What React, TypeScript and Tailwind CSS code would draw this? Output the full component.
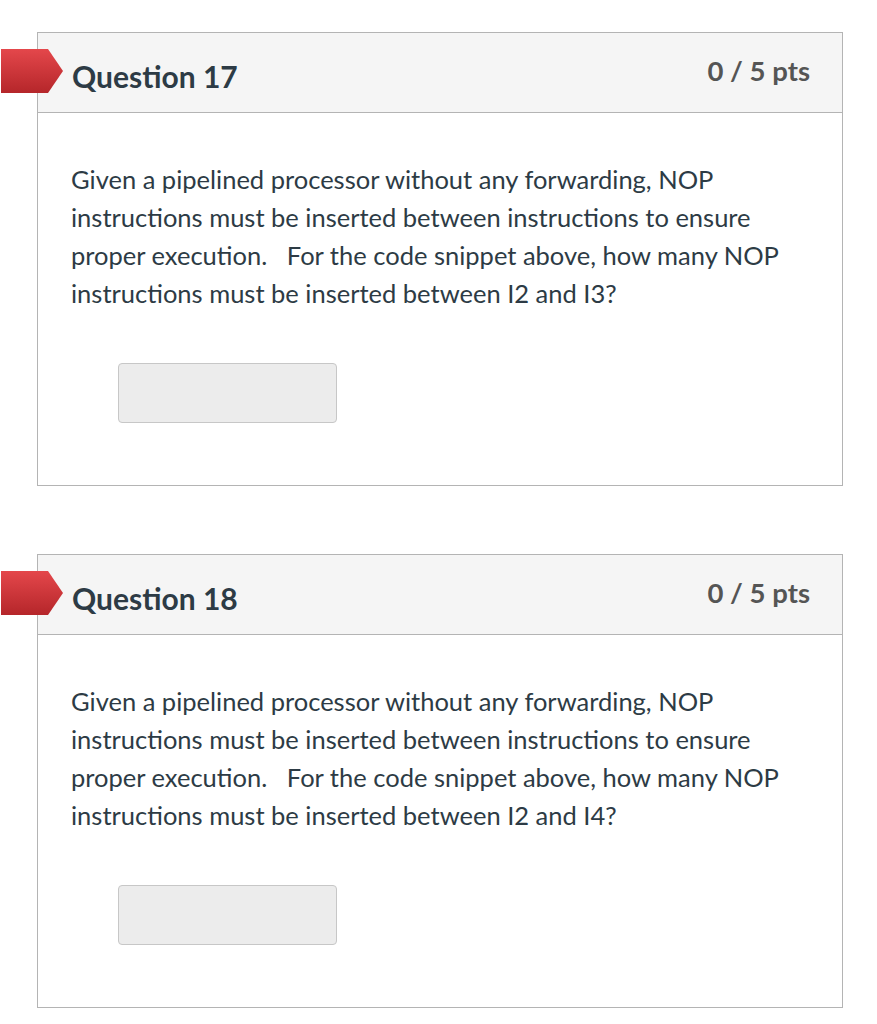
const questions = [
  { num: 17, target: "I3" },
  { num: 18, target: "I4" },
];

const Flag = () => (
  <svg width="63" height="44" viewBox="0 0 63 44" className="absolute left-[-37px] top-[16px]">
    <defs>
      <linearGradient id="flagGrad" x1="0" y1="0" x2="0" y2="1">
        <stop offset="0" stopColor="#e4474b" />
        <stop offset="1" stopColor="#b5262a" />
      </linearGradient>
    </defs>
    <polygon points="0,0 47,0 62,22 47,44 0,44" fill="url(#flagGrad)" />
  </svg>
);

const QuestionCard = ({ num, target }: { num: number; target: string }) => {
  return (
    <div className="relative w-[806px] border border-[#b4b4b4] bg-white">
      <Flag />
      <div className="flex h-[80px] items-center justify-between border-b border-[#b4b4b4] bg-[#f5f5f5] pl-[34px] pr-[32px]">
        <h2 className="mt-[8px] text-[30px] font-bold text-[#2d3b45]">Question {num}</h2>
        <span className="mb-[4px] text-[27.5px] font-bold text-[#555555]">0 / 5 pts</span>
      </div>
      <div className="pt-[47px] pb-[62px] pl-[33px] pr-[20px]">
        <p className="text-[25.5px] leading-[38px] text-[#2d3b45]">
          Given a pipelined processor without any forwarding, NOP
          <br />
          instructions must be inserted between instructions to ensure
          <br />
          proper execution.&nbsp;&nbsp; For the code snippet above, how many NOP
          <br />
          instructions must be inserted between I2 and {target}?
        </p>
        <div className="ml-[47px] mt-[51px] h-[60px] w-[219px] rounded-[4px] border border-[#c7c7c7] bg-[#ececec]" />
      </div>
    </div>
  );
};

export default function App() {
  return (
    <div className="min-h-screen bg-white pl-[37px] pt-[32px] font-['Lato','Liberation_Sans',sans-serif]">
      <div className="flex flex-col gap-[68px]">
        {questions.map((q) => (
          <QuestionCard key={q.num} num={q.num} target={q.target} />
        ))}
      </div>
    </div>
  );
}
